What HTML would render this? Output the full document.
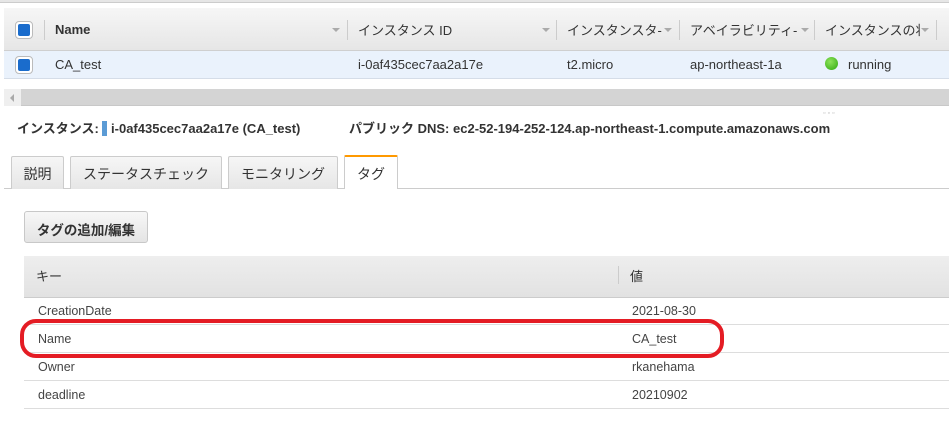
<!DOCTYPE html>
<html><head><meta charset="utf-8"><style>
*{margin:0;padding:0;box-sizing:border-box}
body{width:949px;height:425px;overflow:hidden;background:#fff;font-family:"Liberation Sans","Noto Sans CJK JP",sans-serif;color:#333;position:relative;font-size:13px}
.a{position:absolute;white-space:nowrap}
.cb{position:absolute;width:18px;height:18px;border:1px solid #bbb;border-radius:4px;background:#fff}
.cb:after{content:"";position:absolute;left:2px;top:2px;width:12px;height:12px;background:#1a6ccc;border-radius:2px}
.sep{position:absolute;top:20px;width:1px;height:20px;background:#ccc}
.arr{position:absolute;top:28px;width:0;height:0;border-left:4px solid transparent;border-right:4px solid transparent;border-top:4px solid #aaa}
.tab{position:absolute;top:156px;height:33px;border:1px solid #ccc;border-bottom:none;background:linear-gradient(#f6f6f6,#e6e6e6);font-size:14px;padding-top:7px;text-align:center;border-radius:2px 2px 0 0}
.row{position:absolute;left:24px;width:925px;height:28px;border-bottom:1px solid #ddd;font-size:12.5px;color:#444}
.row span{position:absolute;top:7px}
</style></head><body>
<div class="a" style="left:0;top:0;width:949px;height:3px;background:#e6e6e6;border-bottom:1px solid #ccc"></div>
<div class="a" style="left:4px;top:8px;width:945px;height:43px;background:linear-gradient(#f6f6f6,#e6e6e6);border-bottom:1px solid #cfcfcf"></div>
<div class="cb" style="left:15px;top:21px"></div>
<div class="sep" style="left:44px"></div>
<div class="a" style="left:55px;top:22px;font-weight:bold;font-size:13px">Name</div>
<div class="arr" style="left:332px"></div><div class="sep" style="left:347px"></div>
<div class="a" style="left:358px;top:20px;font-size:13px">インスタンス ID</div>
<div class="arr" style="left:542px"></div><div class="sep" style="left:556px"></div>
<div class="a" style="left:567px;top:20px;font-size:13px;width:100px;overflow:hidden">インスタンスタ-</div>
<div class="arr" style="left:664px"></div><div class="sep" style="left:679px"></div>
<div class="a" style="left:690px;top:20px;font-size:13px;width:110px;overflow:hidden">アベイラビリティ-</div>
<div class="arr" style="left:801px"></div><div class="sep" style="left:814px"></div>
<div class="a" style="left:825px;top:20px;font-size:13px;width:95px;overflow:hidden">インスタンスの状</div>
<div class="arr" style="left:921px"></div><div class="sep" style="left:936px"></div>
<div class="a" style="left:4px;top:51px;width:945px;height:28px;background:#eaf2fc;border-bottom:1px solid #d5dde8"></div>
<div class="cb" style="left:15px;top:56px"></div>
<div class="a" style="left:55px;top:57px">CA_test</div>
<div class="a" style="left:358px;top:57px">i-0af435cec7aa2a17e</div>
<div class="a" style="left:567px;top:57px">t2.micro</div>
<div class="a" style="left:690px;top:57px">ap-northeast-1a</div>
<div class="a" style="left:825px;top:57px;width:13px;height:13px;border-radius:50%;background:radial-gradient(circle at 40% 35%,#8de35a,#2fa80f)"></div>
<div class="a" style="left:848px;top:57px">running</div>
<div class="a" style="left:4px;top:89px;width:945px;height:17px;background:#d4d4d4;border-bottom:1px solid #c8c8c8"></div>
<div class="a" style="left:4px;top:89px;width:17px;height:17px;background:#efefef"></div>
<div class="a" style="left:10px;top:94px;border-top:4px solid transparent;border-bottom:4px solid transparent;border-right:4px solid #aaa"></div>
<div class="a" style="left:823px;top:110px;font-size:7px;color:#bbb;letter-spacing:2px">▫▫▫</div>
<div class="a" style="left:17px;top:118px;font-weight:bold;font-size:13px">インスタンス: <span style="display:inline-block;width:5px;height:15px;background:#5b9bd5;vertical-align:-3px"></span> i-0af435cec7aa2a17e (CA_test)</div>
<div class="a" style="left:349px;top:118px;font-weight:bold;font-size:13px">パブリック DNS: ec2-52-194-252-124.ap-northeast-1.compute.amazonaws.com</div>
<div class="a" style="left:4px;top:188px;width:945px;height:1px;background:#ccc"></div>
<div class="tab" style="left:11px;width:53px">説明</div>
<div class="tab" style="left:70px;width:152px">ステータスチェック</div>
<div class="tab" style="left:228px;width:110px">モニタリング</div>
<div class="tab" style="left:344px;width:54px;background:#fff;border-top:2px solid #f90;height:34px;top:155px">タグ</div>
<div class="a" style="left:24px;top:211px;width:124px;height:32px;border:1px solid #c8c8c8;border-radius:3px;background:linear-gradient(#f7f7f7,#e4e4e4);font-weight:bold;font-size:13.5px;text-align:center;padding-top:7px">タグの追加/編集</div>
<div class="a" style="left:24px;top:256px;width:925px;height:42px;background:linear-gradient(#eeeeee,#e2e2e2);border-bottom:1px solid #ccc"></div>
<div class="a" style="left:36px;top:266px;font-size:13px">キー</div>
<div class="a" style="left:618px;top:266px;width:1px;height:18px;background:#ccc"></div>
<div class="a" style="left:630px;top:266px;font-size:13px">値</div>
<div class="row" style="top:297px"><span style="left:14px">CreationDate</span><span style="left:608px">2021-08-30</span></div>
<div class="row" style="top:325px"><span style="left:14px">Name</span><span style="left:608px">CA_test</span></div>
<div class="row" style="top:353px"><span style="left:14px">Owner</span><span style="left:608px">rkanehama</span></div>
<div class="row" style="top:381px"><span style="left:14px">deadline</span><span style="left:608px">20210902</span></div>
<div class="a" style="left:20px;top:319px;width:704px;height:39px;border:4px solid #e41c24;border-radius:16px"></div>
</body></html>
